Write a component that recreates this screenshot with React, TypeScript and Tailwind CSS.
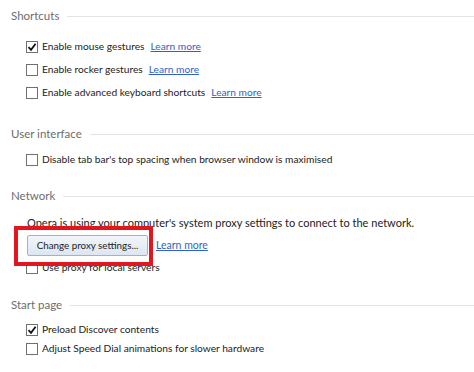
import React from "react";

function Heading({ title, className = "" }: { title: string; className?: string }) {
  return (
    <div className={`flex items-center h-[20px] pl-[11px] ${className}`}>
      <span className="text-[11.5px] text-[#6d6d6d] leading-none">{title}</span>
      <div className="flex-1 h-px bg-[#e3e3e3] ml-[8px]" />
    </div>
  );
}

function Box({ checked }: { checked?: boolean }) {
  return (
    <div className="w-[12px] h-[12px] border border-[#707070] bg-white flex items-center justify-center shrink-0">
      {checked && (
        <svg width="10" height="10" viewBox="0 0 10 10">
          <path d="M1.5 5.2 L4 7.8 L8.6 1.8" fill="none" stroke="#111" strokeWidth="1.8" />
        </svg>
      )}
    </div>
  );
}

function Row({ label, checked, link, h = "h-[23px]" }: { label: string; checked?: boolean; link?: boolean; h?: string }) {
  return (
    <div className={`flex items-center pl-[26px] text-[10.2px] ${h}`}>
      <Box checked={checked} />
      <span className="ml-[4px] text-[#222] whitespace-nowrap">{label}</span>
      {link && <a className="ml-[6px] text-[#2f63c8] underline whitespace-nowrap">Learn more</a>}
    </div>
  );
}

export default function App() {
  return (
    <div
      className="w-[474px] h-[372px] bg-white overflow-hidden pt-[6px] text-[11px]"
      style={{ fontFamily: 'Lato, "Noto Sans", sans-serif' }}
    >
      <Heading title="Shortcuts" />
      <div className="mt-[9px]">
        <Row label="Enable mouse gestures" checked link />
        <Row label="Enable rocker gestures" link />
        <Row label="Enable advanced keyboard shortcuts" link />
      </div>

      <Heading title="User interface" className="mt-[20px]" />
      <div className="mt-[4px]">
        <Row label="Disable tab bar's top spacing when browser window is maximised" />
      </div>

      <Heading title="Network" className="mt-[15px]" />
      <p className="mt-[8px] h-[18px] flex items-center pl-[27px] text-[#222] whitespace-nowrap">
        Opera is using your computer's system proxy settings to connect to the network.
      </p>
      <div className="mt-[3px] flex items-center pl-[27px]">
        <div className="relative">
          <button className="h-[21px] w-[121px] border border-[#9fb4cc] rounded-[2px] bg-gradient-to-b from-[#f2f6fb] to-[#dce6f1] text-[#222] text-[9.8px] leading-none whitespace-nowrap">
            Change proxy settings...
          </button>
          <div className="absolute left-[-13px] top-[-9px] right-[-5px] bottom-[-10px] border-[4px] border-[#e3161e] pointer-events-none" />
        </div>
        <a className="ml-[8px] text-[#2f63c8] underline text-[10.5px]">Learn more</a>
      </div>
      <div className="mt-[3px]">
        <Row label="Use proxy for local servers" h="h-[18px]" />
      </div>

      <Heading title="Start page" className="mt-[18px]" />
      <div className="mt-[5px]">
        <Row label="Preload Discover contents" checked h="h-[19px]" />
        <Row label="Adjust Speed Dial animations for slower hardware" h="h-[19px]" />
      </div>
    </div>
  );
}
